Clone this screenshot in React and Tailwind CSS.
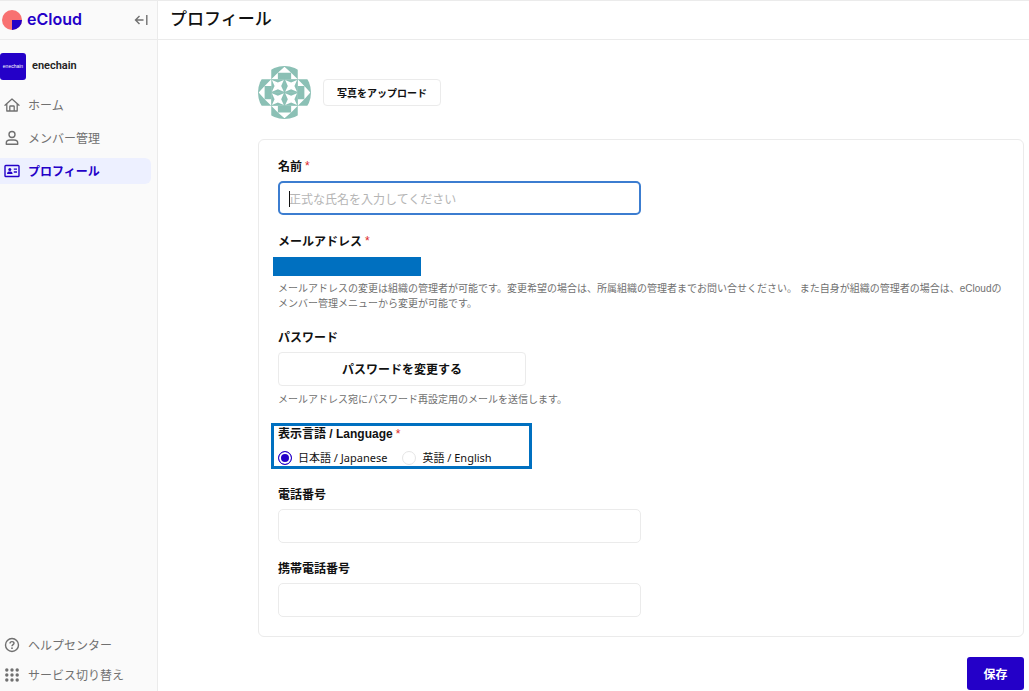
function Logo() {
  return (
    <svg className="size-5 shrink-0" viewBox="0 0 20 20" aria-hidden="true">
      <circle cx="10" cy="10" r="10" fill="#f87171" />
      <path d="M10 10H20A10 10 0 0 1 10 20Z" fill="#2400c8" />
    </svg>
  );
}

function CollapseIcon() {
  return (
    <svg className="h-3 w-3.5" viewBox="0 0 14 12" fill="none" stroke="currentColor" strokeWidth="1.4" aria-hidden="true">
      <path d="M9.5 6H1.5M5.5 2L1.5 6L5.5 10M12.8 1V11" />
    </svg>
  );
}

function HomeIcon() {
  return (
    <svg className="size-4 shrink-0" viewBox="0 0 16 16" fill="none" stroke="currentColor" strokeWidth="1.3" strokeLinecap="round" strokeLinejoin="round" aria-hidden="true">
      <path d="M1 8.2L8 2L15 8.2M2.8 7V14H13.2V7M5.8 14V9.6Q5.8 9 6.4 9H9.6Q10.2 9 10.2 9.6V14" />
    </svg>
  );
}

function MemberIcon() {
  return (
    <svg className="size-4 shrink-0" viewBox="0 0 16 16" fill="none" stroke="currentColor" strokeWidth="1.4" aria-hidden="true">
      <circle cx="8" cy="4.5" r="3" />
      <path d="M2.3 14.3V13C2.3 11 4 10 6 10H10C12 10 13.7 11 13.7 13V14.3Z" strokeLinejoin="round" />
    </svg>
  );
}

function ProfileIcon() {
  return (
    <svg className="size-4 shrink-0" viewBox="0 0 16 16" fill="none" stroke="currentColor" aria-hidden="true">
      <rect x="1" y="2.5" width="14" height="11" rx="0.8" strokeWidth="1.4" />
      <circle cx="5.8" cy="6.4" r="1.5" fill="currentColor" stroke="none" />
      <path d="M3 11C3 9.2 4.2 8.6 5.8 8.6S8.6 9.2 8.6 11Z" fill="currentColor" stroke="none" />
      <path d="M9.8 6.2H13M9.8 9H13" strokeWidth="1.3" />
    </svg>
  );
}

function HelpIcon() {
  return (
    <svg className="size-4 shrink-0" viewBox="0 0 16 16" fill="none" stroke="currentColor" strokeWidth="1.4" aria-hidden="true">
      <circle cx="8" cy="8" r="6.5" />
      <path d="M6 6.5C6 5.3 6.8 4.6 8 4.6S10 5.3 10 6.3C10 7.6 8 7.7 8 9.3" />
      <circle cx="8" cy="11.2" r="0.9" fill="currentColor" stroke="none" />
    </svg>
  );
}

function AppsIcon() {
  return (
    <svg className="size-4 shrink-0" viewBox="0 0 16 16" fill="currentColor" aria-hidden="true">
      {[3, 8, 13].map((y) => [2.8, 8, 13.2].map((x) => <circle key={`${x}-${y}`} cx={x} cy={y} r="1.7" />))}
    </svg>
  );
}

function Avatar() {
  return (
    <svg className="size-[53px] shrink-0 rounded-full" viewBox="0 0 80 80" role="img" aria-label="プロフィール写真">
      {[0, 90, 180, 270].map((angle) => (
        <g key={angle} transform={`rotate(${angle} 40 40)`}>
          <path d="M20 0H60V20.5H20Z" fill="#8bc0b5" />
          <path d="M40 1L50 10H30ZM30 10V20H20ZM50 10V20H60Z" fill="#fff" />
          <path d="M20 20H40.5V40.5H20Z" fill="#8bc0b5" />
        </g>
      ))}
      {[0, 90, 180, 270].map((angle) => (
        <path key={angle} transform={`rotate(${angle} 40 40)`} d="M21 21L30 25L39 21L35 30L39 39L30 35L21 39L25 30Z" fill="#fff" />
      ))}
    </svg>
  );
}

function NavLink({ icon, children, active }) {
  return (
    <a
      href="#"
      aria-current={active ? "page" : undefined}
      className={`flex h-[26px] items-center gap-2 rounded-r-md pl-1 text-xs ${
        active ? "bg-[#edf0ff] font-bold text-[#2400c8]" : "text-[#707070]"
      }`}
    >
      {icon}
      {children}
    </a>
  );
}

function Required() {
  return <span className="ml-[3px] font-['Liberation_Sans',sans-serif] font-normal text-[#dc2626]">*</span>;
}

function Label({ htmlFor, required, children }) {
  const style = "flex text-xs leading-[18px] font-bold text-[#111]";
  const content = (
    <>
      {children}
      {required && <Required />}
    </>
  );
  return htmlFor ? (
    <label htmlFor={htmlFor} className={style}>{content}</label>
  ) : (
    <div className={style}>{content}</div>
  );
}

function Radio({ label, ...props }) {
  return (
    <label className="flex items-center gap-1.5 font-['Noto_Sans','Noto_Sans_CJK_JP',sans-serif] text-[11px] leading-4">
      <input
        type="radio"
        name="language"
        className="size-3.5 appearance-none rounded-full border border-[#e5e5e5] bg-white checked:border-[#2400c8] checked:bg-[#2400c8] checked:shadow-[inset_0_0_0_2px_#fff]"
        {...props}
      />
      {label}
    </label>
  );
}

const field =
  "h-[34px] w-full rounded-[5px] border border-[#ebebeb] bg-white px-2.5 text-xs outline-none placeholder:text-[#b5b5b5] focus:border-2 focus:border-[#3c7dd0] focus:px-[9px]";

export default function App() {
  return (
    <div className="flex min-h-screen border-t border-[#ebebeb] bg-white font-['Noto_Sans_CJK_JP',sans-serif] text-[#111]">
      <aside className="flex w-[158px] shrink-0 flex-col border-r border-[#ebebeb] bg-[#fafafa]">
        <div className="flex h-[39px] items-center border-b border-[#ebebeb] pr-[9px] pl-0.5">
          <Logo />
          <span className="ml-[5px] pb-0.5 font-['Inter',sans-serif] text-base font-semibold text-[#2400c8]">eCloud</span>
          <button type="button" aria-label="メニューを閉じる" className="ml-auto text-[#707070]">
            <CollapseIcon />
          </button>
        </div>
        <div className="mt-[13px] flex items-center gap-1.5">
          <div className="flex h-[27px] w-[26px] items-center justify-center rounded-[3px] bg-[#2400c8] font-['Liberation_Sans',sans-serif] text-[5px] text-white">
            enechain
          </div>
          <span className="font-['Roboto',sans-serif] text-[11px] font-semibold text-[#222]">enechain</span>
        </div>
        <nav className="mt-3 mr-1.5 flex flex-1 flex-col gap-[7px]">
          <NavLink icon={<HomeIcon />}>ホーム</NavLink>
          <NavLink icon={<MemberIcon />}>メンバー管理</NavLink>
          <NavLink icon={<ProfileIcon />} active>プロフィール</NavLink>
          <div className="mt-auto mb-[3px] flex flex-col gap-1">
            <NavLink icon={<HelpIcon />}>ヘルプセンター</NavLink>
            <NavLink icon={<AppsIcon />}>サービス切り替え</NavLink>
          </div>
        </nav>
      </aside>

      <main className="min-w-0 flex-1">
        <header className="flex h-[39px] items-center border-b border-[#ebebeb] px-3">
          <h1 className="font-['Liberation_Sans','Noto_Sans_CJK_JP',sans-serif] text-[17px] leading-6 font-medium">プロフィール</h1>
        </header>
        <form className="pt-[26px] pr-[5px] pl-[100px]" onSubmit={(event) => event.preventDefault()}>
          <div className="flex items-center gap-3">
            <Avatar />
            <button type="button" className="h-[27px] w-[118px] rounded border border-[#ebebeb] text-[10px] font-bold">
              写真をアップロード
            </button>
          </div>

          <section className="mt-5 rounded-md border border-[#ebebeb] px-[19px] pt-[17px] pb-[19px]">
            <Label htmlFor="name" required>名前</Label>
            <div className="relative mt-1.5 max-w-[363px]">
              <input
                id="name"
                autoFocus
                required
                placeholder="正式な氏名を入力してください"
                className={`peer block placeholder-shown:caret-transparent ${field}`}
              />
              <span className="pointer-events-none absolute top-2.5 left-[11px] hidden h-4 w-px bg-[#111] peer-placeholder-shown:peer-focus:block" />
            </div>

            <div className="mt-[17px]">
              <Label required>メールアドレス</Label>
              <div className="mt-[7px] -ml-[5px] h-[19px] w-[148px] bg-[#0070c0]" />
              <p className="mt-[5px] font-['Liberation_Sans','Noto_Sans_CJK_JP',sans-serif] text-[10px] leading-[15px] text-[#707070]">
                メールアドレスの変更は組織の管理者が可能です。変更希望の場合は、所属組織の管理者までお問い合せください。 また自身が組織の管理者の場合は、eCloudのメンバー管理メニューから変更が可能です。
              </p>
            </div>

            <div className="mt-[17px]">
              <Label>パスワード</Label>
              <button type="button" className="mt-1.5 block h-[34px] w-[248px] rounded border border-[#ebebeb] text-xs font-bold">
                パスワードを変更する
              </button>
              <p className="mt-[5px] text-[10px] leading-[15px] text-[#707070]">
                メールアドレス宛にパスワード再設定用のメールを送信します。
              </p>
            </div>

            <div role="radiogroup" aria-labelledby="language" className="mt-[17px] -ml-[7px] w-[261px] border-3 border-[#0070c0] pl-1">
              <div id="language" className="flex font-['Liberation_Sans','Noto_Sans_CJK_JP',sans-serif] text-xs leading-4 font-bold">
                表示言語 / Language<Required />
              </div>
              <div className="mt-2 flex gap-[15px]">
                <Radio label="日本語 / Japanese" value="ja" defaultChecked />
                <Radio label="英語 / English" value="en" />
              </div>
            </div>

            <div className="mt-4 max-w-[363px]">
              <Label htmlFor="phone">電話番号</Label>
              <input id="phone" type="tel" className={`mt-1.5 block ${field}`} />
            </div>
            <div className="mt-4 max-w-[363px]">
              <Label htmlFor="mobile">携帯電話番号</Label>
              <input id="mobile" type="tel" className={`mt-1.5 block ${field}`} />
            </div>
          </section>

          <div className="mt-5 flex justify-end">
            <button type="submit" className="h-[33px] w-[57px] rounded-[3px] bg-[#2400c8] text-xs font-bold text-white">保存</button>
          </div>
        </form>
      </main>
    </div>
  );
}
